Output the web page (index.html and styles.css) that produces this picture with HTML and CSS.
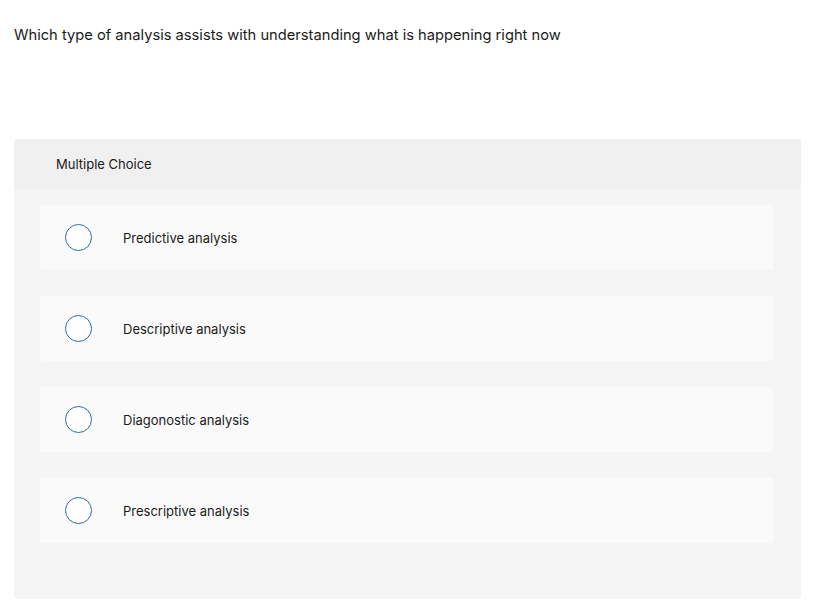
FILE: index.html
```html
<!DOCTYPE html>
<html>
<head>
<meta charset="utf-8">
<link rel="stylesheet" href="styles.css">
</head>
<body>
<p class="question">Which type of analysis assists with understanding what is happening right now</p>
<div class="card">
  <div class="card-head">Multiple Choice</div>
  <div class="card-body">
    <div class="option"><span class="radio"></span><span class="label">Predictive analysis</span></div>
    <div class="option"><span class="radio"></span><span class="label">Descriptive analysis</span></div>
    <div class="option"><span class="radio"></span><span class="label">Diagonostic analysis</span></div>
    <div class="option"><span class="radio"></span><span class="label">Prescriptive analysis</span></div>
  </div>
</div>
</body>
</html>
```
FILE: styles.css
```css
html, body { margin: 0; padding: 0; background: #fff; }
body {
  font-family: Inter, "Liberation Sans", sans-serif;
  color: #1a1a1a;
  padding: 0 22px 0 14px;
}
.question {
  margin: 0;
  padding-top: 25px;
  font-size: 14.7px;
  line-height: 20px;
  height: 114px;
}
.card {
  background: #f5f5f5;
  border-radius: 4px;
  overflow: hidden;
  height: 460px;
}
.card-head {
  background: #f0f0f0;
  height: 50px;
  box-sizing: border-box;
  padding-left: 42px;
  display: flex;
  align-items: center;
  font-size: 13px;
}
.card-body {
  padding: 16px 28px 0 26px;
  display: flex;
  flex-direction: column;
  gap: 26px;
}
.option {
  background: #fafafa;
  border-radius: 3px;
  height: 65px;
  display: flex;
  align-items: center;
  padding-left: 25px;
}
.radio {
  width: 25px;
  height: 25px;
  border: 1.5px solid #2a6aad;
  border-radius: 50%;
  background: #fff;
  flex: none;
}
.label {
  margin-left: 31px;
  font-size: 13px;
}
```
